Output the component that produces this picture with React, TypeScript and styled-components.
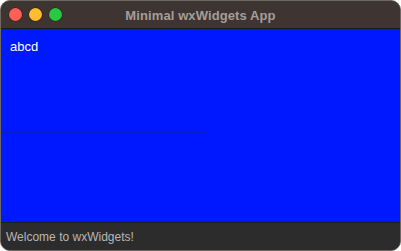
import React from 'react';
import styled, { createGlobalStyle } from 'styled-components';

const GlobalStyle = createGlobalStyle`
  html, body {
    margin: 0;
    padding: 0;
    background: #ffffff;
  }
  body {
    font-family: "Liberation Sans", Arial, sans-serif;
  }
`;

const Window = styled.div`
  width: 401px;
  height: 251px;
  box-sizing: border-box;
  display: flex;
  flex-direction: column;
  border-radius: 10px;
  overflow: hidden;
  border: 1px solid #6e6864;
  background: #2c2c2c;
`;

const TitleBar = styled.div`
  height: 27px;
  flex: none;
  position: relative;
  display: flex;
  align-items: center;
  justify-content: center;
  background: #3e3532;
  border-bottom: 1px solid #1e1a18;
`;

const Lights = styled.div`
  position: absolute;
  left: 8px;
  top: 7px;
  display: flex;
  gap: 7px;
`;

const Light = styled.span<{ $color: string; $ring: string }>`
  width: 13px;
  height: 13px;
  border-radius: 50%;
  background: ${(p) => p.$color};
  box-shadow: 0 0 0 0.5px ${(p) => p.$ring};
`;

const Title = styled.div`
  color: #a59d99;
  font-size: 13px;
  font-weight: bold;
  letter-spacing: 0.1px;
  margin-top: 1px;
`;

const Canvas = styled.div`
  flex: 1;
  background: #0018ff;
  display: flex;
  flex-direction: column;
  padding: 10px 0 0 9px;
`;

const Label = styled.div`
  color: #ffffff;
  font-size: 13px;
  line-height: 15px;
`;

const Rule = styled.div`
  margin-top: 78px;
  margin-left: -8px;
  width: 202px;
  height: 1px;
  background: #0f16d0;
`;

const StatusBar = styled.div`
  height: 27px;
  flex: none;
  display: flex;
  align-items: center;
  padding-left: 5px;
  background: #2c2c2c;
  border-top: 1px solid #1f1f1f;
  color: #b7b7b7;
  font-size: 12px;
`;

const App = () => (
  <>
    <GlobalStyle />
    <Window>
      <TitleBar>
        <Lights>
          <Light $color="#fe5f57" $ring="#2a1d1b" />
          <Light $color="#febc2e" $ring="#2a1d1b" />
          <Light $color="#28c840" $ring="#2a1d1b" />
        </Lights>
        <Title>Minimal wxWidgets App</Title>
      </TitleBar>
      <Canvas>
        <Label>abcd</Label>
        <Rule />
      </Canvas>
      <StatusBar>Welcome to wxWidgets!</StatusBar>
    </Window>
  </>
);

export default App;
